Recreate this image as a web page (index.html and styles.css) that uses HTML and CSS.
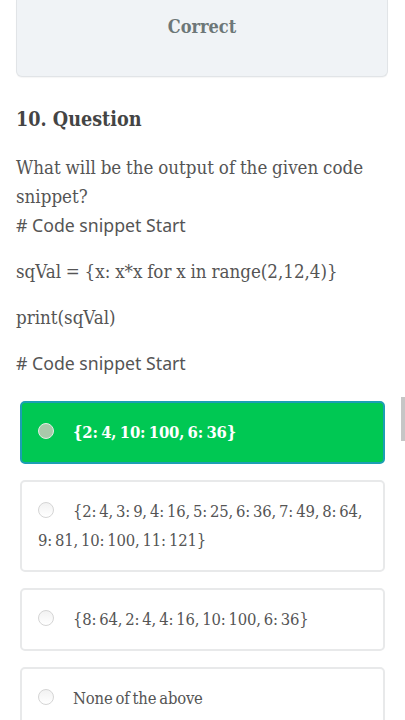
FILE: index.html
```html
<!DOCTYPE html>
<html>
<head>
<meta charset="utf-8">
<link rel="stylesheet" href="styles.css">
</head>
<body>
<div class="page">
  <div class="result-box">Correct</div>
  <h2 class="q-title">10. Question</h2>
  <div class="q-text">
    <p class="line">What will be the output of the given code snippet?</p>
    <p class="line sans"># Code snippet Start</p>
    <p class="line gap">sqVal = {x: x*x for x in range(2,12,4)}</p>
    <p class="line gap">print(sqVal)</p>
    <p class="line gap sans"># Code snippet Start</p>
  </div>
  <div class="options">
    <div class="option selected"><span class="radio"></span><span class="opt-text">{2: 4, 10: 100, 6: 36}</span></div>
    <div class="option"><span class="radio"></span><span class="opt-text">{2: 4, 3: 9, 4: 16, 5: 25, 6: 36, 7: 49, 8: 64, 9: 81, 10: 100, 11: 121}</span></div>
    <div class="option"><span class="radio"></span><span class="opt-text">{8: 64, 2: 4, 4: 16, 10: 100, 6: 36}</span></div>
    <div class="option"><span class="radio"></span><span class="opt-text">None of the above</span></div>
  </div>
</div>
<div class="scrollbar"></div>
</body>
</html>
```
FILE: styles.css
```css
html, body {
  margin: 0;
  padding: 0;
  background: #ffffff;
}
body {
  font-family: "DejaVu Serif Condensed", "DejaVu Serif", "Liberation Serif", serif;
  font-stretch: condensed;
  color: #555555;
  overflow: hidden;
}
.page {
  padding: 0 17px 0 16px;
}
.result-box {
  height: 77px;
  box-sizing: border-box;
  background: #f0f3f6;
  border: 1px solid #e1e4e7;
  border-top: none;
  border-radius: 0 0 6px 6px;
  box-shadow: 0 1px 1px rgba(0,0,0,0.04);
  text-align: center;
  font-weight: bold;
  font-size: 18px;
  color: #6d7778;
  padding-top: 14px;
  line-height: 26px;
}
.q-title {
  margin: 28px 0 0 0;
  font-size: 19.6px;
  font-weight: bold;
  color: #444444;
  line-height: 30px;
}
.q-text {
  margin-top: 18px;
  font-size: 18.6px;
  line-height: 29px;
  word-spacing: -0.5px;
}
.line {
  margin: 0;
}
.line.gap {
  margin-top: 17px;
}
.sans {
  font-family: "Noto Sans", "Open Sans", sans-serif;
  font-stretch: normal;
  font-size: 17.7px;
  word-spacing: 0;
}
.options {
  margin: 23px 3px 0 4px;
  display: flex;
  flex-direction: column;
  gap: 16px;
}
.option {
  border: 2px solid #e8e9ea;
  border-radius: 5px;
  padding: 15px 16px;
  font-size: 16.5px;
  word-spacing: -1.5px;
  letter-spacing: -0.2px;
  line-height: 29px;
  color: #555555;
}
.option.selected {
  background: #00c853;
  border-color: #1c9fb3;
  color: #ffffff;
  font-weight: bold;
}
.radio {
  display: inline-block;
  width: 16px;
  height: 16px;
  border-radius: 50%;
  border: 1px solid #d5d5d5;
  background: linear-gradient(#f2f2f2, #ffffff);
  box-sizing: border-box;
  vertical-align: -1px;
  margin-right: 19px;
}
.selected .radio {
  background: #a8c9ab;
  border: 1.5px solid #e3eee4;
}
.scrollbar {
  position: absolute;
  right: 0;
  top: 397px;
  width: 4px;
  height: 44px;
  background: #c6c6c6;
}
```
